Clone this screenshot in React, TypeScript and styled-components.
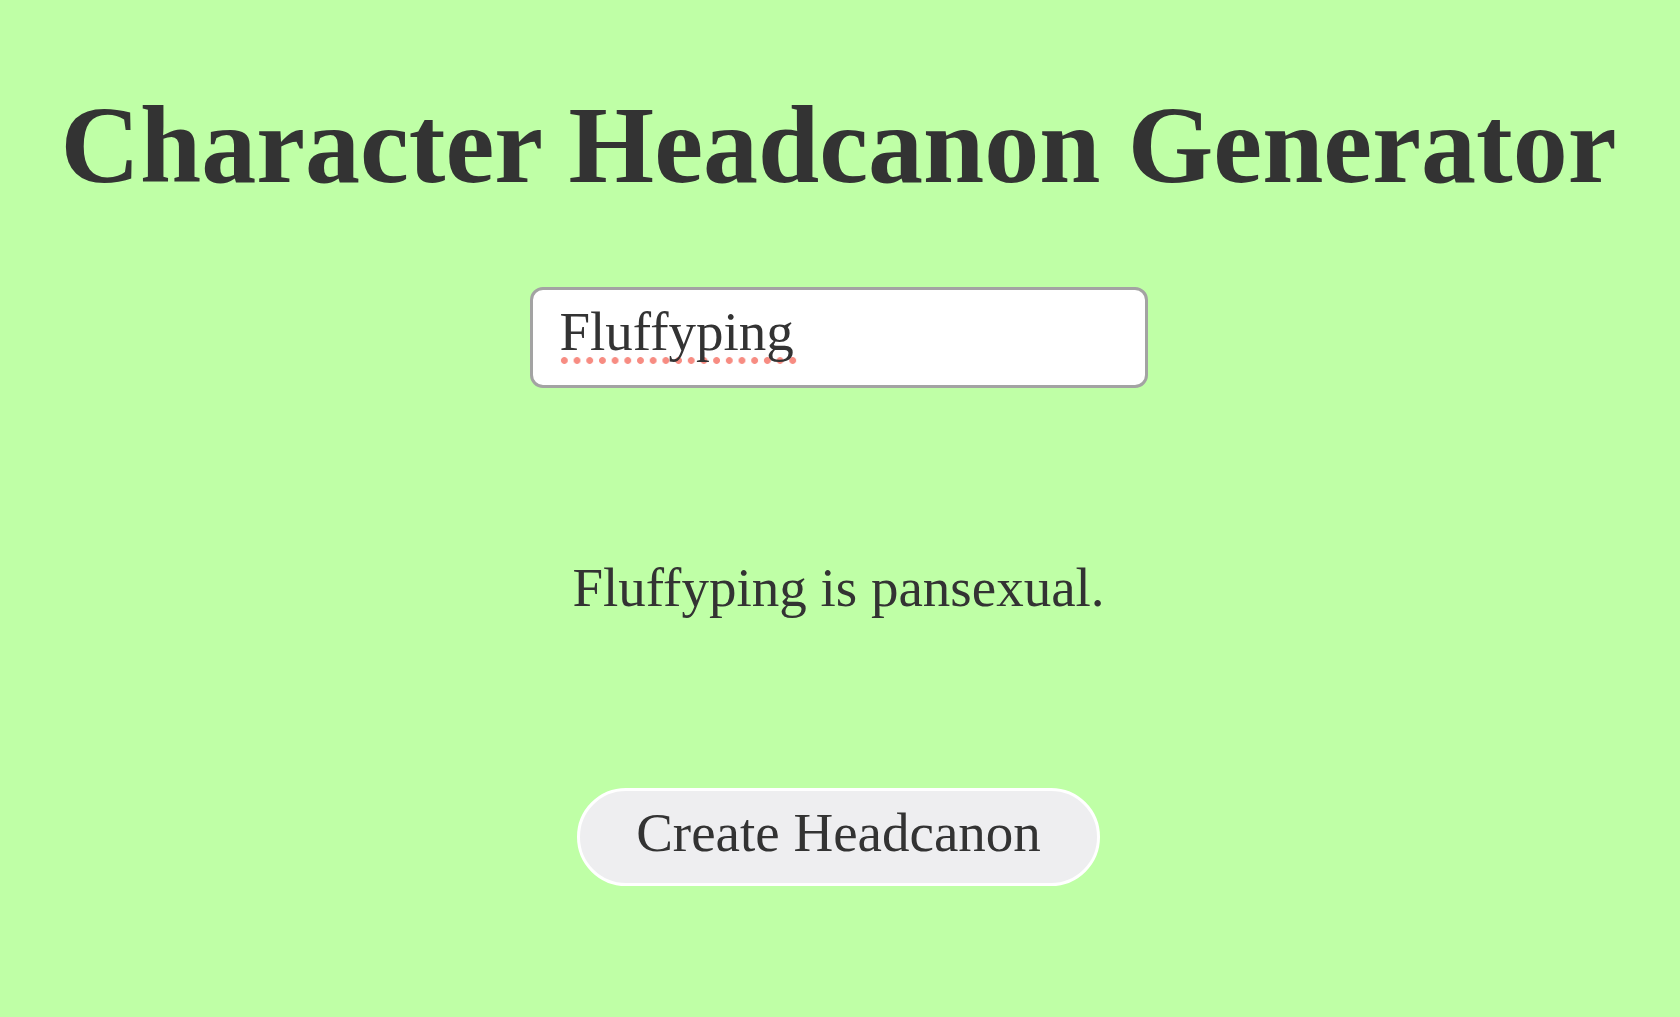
import React, { useState } from "react";
import styled, { createGlobalStyle } from "styled-components";

const GlobalStyle = createGlobalStyle`
  html, body {
    margin: 0;
    padding: 0;
    background: #bfffa6;
  }
  body {
    font-family: "Liberation Serif", "Times New Roman", serif;
    color: #333333;
  }
`;

const Page = styled.main`
  min-height: 100vh;
  display: flex;
  flex-direction: column;
  align-items: center;
  padding: 82px 3px 0 0;
  box-sizing: border-box;
`;

const Title = styled.h1`
  margin: 0;
  font-size: 110px;
  font-weight: 700;
  line-height: 1.15;
  color: #333333;
  white-space: nowrap;
`;

/* Text field with the browser's spell-check dots painted under the word */
const NameInput = styled.input`
  margin-top: 78px;
  width: 618px;
  height: 101px;
  box-sizing: border-box;
  padding: 0 28px 12px 27px;
  border: 3px solid #a3a3a3;
  border-radius: 13px;
  background-color: #ffffff;
  background-image:
    linear-gradient(90deg, #ffffff 25px, transparent 25px, transparent 266px, #ffffff 266px),
    radial-gradient(circle at center, #f78c82 3px, rgba(247, 140, 130, 0) 3.8px);
  background-size: 100% 100%, 12.7px 9px;
  background-position: 0 0, 25px 66px;
  background-repeat: no-repeat, repeat-x;
  font-family: "Liberation Serif", "Times New Roman", serif;
  font-size: 55px;
  line-height: 1.15;
  color: #333333;
  outline: none;
`;

const Result = styled.p`
  margin: 168px 0 0;
  font-size: 55px;
  line-height: 1.15;
  color: #333333;
`;

const CreateButton = styled.button`
  margin-top: 169px;
  width: 523px;
  height: 98px;
  box-sizing: border-box;
  border: 3px solid #ffffff;
  border-radius: 49px;
  background: #eeeef0;
  font-family: "Liberation Serif", "Times New Roman", serif;
  font-size: 55px;
  line-height: 1.15;
  color: #333333;
  cursor: pointer;
  padding: 0 0 9px;
`;

const traits = ["pansexual", "a morning person", "afraid of moths", "secretly a poet"];

export default function App() {
  const [name, setName] = useState("Fluffyping");
  const [trait, setTrait] = useState("pansexual");

  return (
    <>
      <GlobalStyle />
      <Page>
        <Title>Character Headcanon Generator</Title>
        <NameInput value={name} onChange={(e) => setName(e.target.value)} spellCheck={false} />
        <Result>
          {name} is {trait}.
        </Result>
        <CreateButton
          onClick={() => setTrait(traits[Math.floor(Math.random() * traits.length)])}
        >
          Create Headcanon
        </CreateButton>
      </Page>
    </>
  );
}
